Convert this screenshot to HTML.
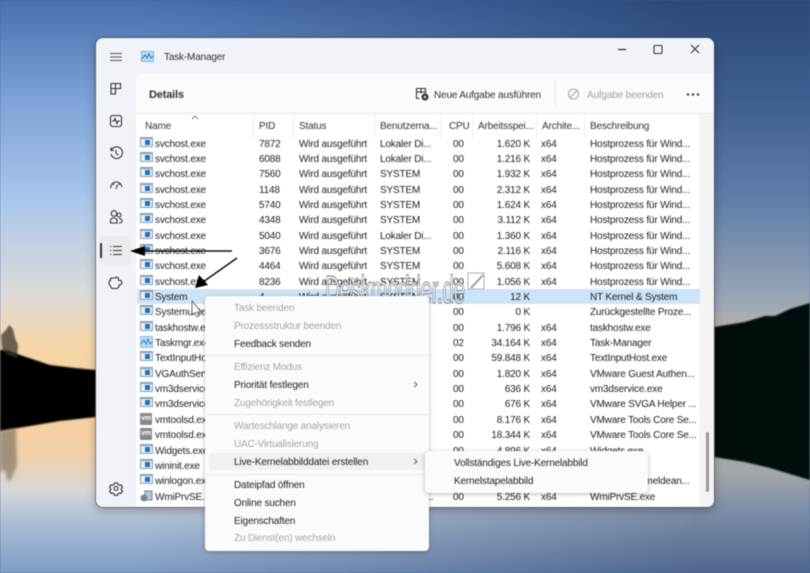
<!DOCTYPE html>
<html lang="de"><head><meta charset="utf-8"><title>Task-Manager</title>
<style>
html,body{margin:0;padding:0;width:810px;height:573px;overflow:hidden;background:#3f5f98}
#p{position:relative;width:810px;height:573px;overflow:hidden;font:10px/15px "Liberation Sans",sans-serif;letter-spacing:-.17px;color:#222;filter:blur(.4px)}
.a{position:absolute}
.bgr{left:0;top:0;width:810px;height:573px;background:linear-gradient(180deg,#2a4879 0,#3f5f92 100px,#5f7ea9 200px,#9aa6b6 300px,#b8b4a8 330px,#a5a8a8 470px,#7d8ea8 510px,#4f658c 573px)}
.bgl{left:0;top:0;width:810px;height:573px;background:linear-gradient(180deg,#4a70ae 0,#7ea3d8 100px,#a9c6ea 200px,#dddcd8 295px,#f6d6a8 345px,#f7d0a2 430px,#efd2ae 460px,#d6d8d8 490px,#a9bcd6 525px,#7f9cc4 573px);-webkit-mask-image:linear-gradient(90deg,#000 0,#000 130px,rgba(0,0,0,.55) 400px,transparent 700px);mask-image:linear-gradient(90deg,#000 0,#000 130px,rgba(0,0,0,.55) 400px,transparent 700px)}
#win{left:96px;top:38px;width:618px;height:469px;background:#f1f3f8;border-radius:7px;box-shadow:0 0 0 1px rgba(70,70,80,.55),0 3px 10px rgba(0,0,0,.3)}
#hd{left:136px;top:74px;width:578px;height:39px;background:#fafbfc;border-top-left-radius:6px;border-bottom:1px solid #e8e8ea}
#tb{left:136px;top:114px;width:578px;height:393px;background:#fff;border-bottom-right-radius:7px;overflow:hidden}
#sb{left:699px;top:114px;width:15px;height:393px;background:#f4f4f5;border-bottom-right-radius:7px}
#th{left:705.500px;top:432px;width:3px;height:60px;background:#9a9a9a;border-radius:2px}
.s{position:absolute;top:114px;width:1px;height:24px;background:#ececec}
.h{position:absolute;top:119px;white-space:nowrap;color:#333}
.r{position:absolute;left:0;width:810px;height:15px;white-space:nowrap}
.r span{position:absolute;top:1px}
.n{left:155px}.i{left:259px}.t{left:299px}.u{left:380px}.c{left:453px}.m{right:280px}.x{left:541px}.d{left:590px}
.o{position:absolute;left:140px;top:1px;width:10.500px;height:7px;border:1px solid #929eaa;border-top-width:2px;background:#e6eef6}
.o:after{content:"";position:absolute;left:3.500px;top:1px;width:5px;height:5px;background:#1a74c6}
.vm{position:absolute;left:140px;top:1px;width:12px;height:12px;background:#85888c;border-radius:1px;color:#fff;font:bold 7px/11px "Liberation Sans",sans-serif;text-align:center;overflow:hidden}
#menu{left:205px;top:296px;width:224px;height:255px;background:#fbfbfb;border-radius:4px;box-shadow:0 1px 5px rgba(0,0,0,.28)}
#sub{left:425px;top:451px;width:223px;height:42px;background:#fbfbfb;border-radius:4px;box-shadow:0 1px 5px rgba(0,0,0,.28)}
.mi{position:absolute;left:234px;white-space:nowrap;color:#222}
.dis{color:#a6a6a6}
.sep{position:absolute;left:206px;width:222px;height:1px;background:#e6e6e6}
#hv{left:209px;top:453px;width:216px;height:17px;background:#f1f1f1;border-radius:3px}
#sel{left:100px;top:236px;width:31px;height:29px;background:#eaecf0;border-radius:4px}
#wm{left:325px;top:264px;font:26px/34px "Liberation Sans",sans-serif;color:rgba(255,255,255,.72);-webkit-text-stroke:.7px rgba(90,100,110,.8);letter-spacing:-.4px;white-space:nowrap;transform:scale(.79,1.5);transform-origin:0 0}
svg{position:absolute;left:0;top:0}
</style></head><body><div id="p">
<div class="a bgr"></div><div class="a bgl"></div>
<svg width="810" height="573">
<defs><filter id="b1" x="-30%" y="-30%" width="160%" height="160%"><feGaussianBlur stdDeviation="1.5"/></filter><filter id="b2" x="-10%" y="-10%" width="120%" height="120%"><feGaussianBlur stdDeviation=".8"/></filter></defs>
<path d="M0 350L8 350 20 355 35 360 50 365 75 368 96 370V417L60 421 30 426 0 431Z" fill="#050505" filter="url(#b2)"/>
<path d="M2 350L1 335 6 330 9 325 13 329 15 338 18 345 17 358 8 355Z" fill="#3a372f" opacity=".75" filter="url(#b2)"/>
<path d="M0 431L16 428 17 465 12 478 8 482 5 470 0 472Z" fill="#6d675a" opacity=".6" filter="url(#b1)"/>
<path d="M714 327L745 322 765 316 775 316 790 309 810 303V480L790 474 770 468 745 462 714 457Z" fill="#05080f" filter="url(#b2)"/>
</svg>
<div class="a" id="win"></div><div class="a" id="hd"></div><div class="a" id="tb"></div><div class="a" id="sb"></div><div class="a" id="th"></div>
<div class="a" id="sel"></div><div class="a" style="left:100px;top:243px;width:2px;height:15px;background:#333"></div>

<div class="a" style="left:164px;top:50px;color:#333">Task-Manager</div>
<div class="a" style="left:149px;top:88px;font-weight:bold;font-size:11px;color:#333">Details</div>
<div class="a" style="left:434px;top:88px;color:#333">Neue Aufgabe ausführen</div>
<div class="a" style="left:587px;top:88px;color:#a2a2a2">Aufgabe beenden</div>
<div class="a" style="left:555px;top:81px;width:1px;height:26px;background:#ececec"></div>

<div class="s" style="left:253px"></div><div class="s" style="left:293px"></div><div class="s" style="left:374px"></div><div class="s" style="left:440px"></div><div class="s" style="left:472px"></div><div class="s" style="left:536px"></div><div class="s" style="left:584px"></div>
<div class="h" style="left:145px">Name</div><div class="h" style="left:259px">PID</div><div class="h" style="left:299px">Status</div><div class="h" style="left:380px">Benutzerna...</div><div class="h" style="left:449px">CPU</div><div class="h" style="left:478px">Arbeitsspei...</div><div class="h" style="left:542px">Archite...</div><div class="h" style="left:590px">Beschreibung</div>

<div class="a" style="left:137px;top:289px;width:563px;height:15px;background:#cce4f8"></div>

<div class="r" style="top:135.5px"><i class="o"></i><span class="n">svchost.exe</span><span class="i">7872</span><span class="t">Wird ausgeführt</span><span class="u">Lokaler Di...</span><span class="c">00</span><span class="m">1.620 K</span><span class="x">x64</span><span class="d">Hostprozess für Wind...</span></div>
<div class="r" style="top:150.85px"><i class="o"></i><span class="n">svchost.exe</span><span class="i">6088</span><span class="t">Wird ausgeführt</span><span class="u">Lokaler Di...</span><span class="c">00</span><span class="m">1.216 K</span><span class="x">x64</span><span class="d">Hostprozess für Wind...</span></div>
<div class="r" style="top:166.2px"><i class="o"></i><span class="n">svchost.exe</span><span class="i">7560</span><span class="t">Wird ausgeführt</span><span class="u">SYSTEM</span><span class="c">00</span><span class="m">1.932 K</span><span class="x">x64</span><span class="d">Hostprozess für Wind...</span></div>
<div class="r" style="top:181.55px"><i class="o"></i><span class="n">svchost.exe</span><span class="i">1148</span><span class="t">Wird ausgeführt</span><span class="u">SYSTEM</span><span class="c">00</span><span class="m">2.312 K</span><span class="x">x64</span><span class="d">Hostprozess für Wind...</span></div>
<div class="r" style="top:196.9px"><i class="o"></i><span class="n">svchost.exe</span><span class="i">5740</span><span class="t">Wird ausgeführt</span><span class="u">SYSTEM</span><span class="c">00</span><span class="m">1.624 K</span><span class="x">x64</span><span class="d">Hostprozess für Wind...</span></div>
<div class="r" style="top:212.25px"><i class="o"></i><span class="n">svchost.exe</span><span class="i">4348</span><span class="t">Wird ausgeführt</span><span class="u">SYSTEM</span><span class="c">00</span><span class="m">3.112 K</span><span class="x">x64</span><span class="d">Hostprozess für Wind...</span></div>
<div class="r" style="top:227.6px"><i class="o"></i><span class="n">svchost.exe</span><span class="i">5040</span><span class="t">Wird ausgeführt</span><span class="u">Lokaler Di...</span><span class="c">00</span><span class="m">1.360 K</span><span class="x">x64</span><span class="d">Hostprozess für Wind...</span></div>
<div class="r" style="top:242.95px"><i class="o"></i><span class="n">svchost.exe</span><span class="i">3676</span><span class="t">Wird ausgeführt</span><span class="u">SYSTEM</span><span class="c">00</span><span class="m">2.116 K</span><span class="x">x64</span><span class="d">Hostprozess für Wind...</span></div>
<div class="r" style="top:258.3px"><i class="o"></i><span class="n">svchost.exe</span><span class="i">4464</span><span class="t">Wird ausgeführt</span><span class="u">SYSTEM</span><span class="c">00</span><span class="m">5.608 K</span><span class="x">x64</span><span class="d">Hostprozess für Wind...</span></div>
<div class="r" style="top:273.65px"><i class="o"></i><span class="n">svchost.exe</span><span class="i">8236</span><span class="t">Wird ausgeführt</span><span class="u">SYSTEM</span><span class="c">00</span><span class="m">1.056 K</span><span class="x">x64</span><span class="d">Hostprozess für Wind...</span></div>
<div class="r" style="top:289px"><i class="o"></i><span class="n">System</span><span class="i">4</span><span class="t">Wird ausgeführt</span><span class="u">SYSTEM</span><span class="c">00</span><span class="m">12 K</span><span class="d">NT Kernel &amp; System</span></div>
<div class="r" style="top:304.35px"><i class="o"></i><span class="n">Systemunterbrechungen</span><span class="c">00</span><span class="m">0 K</span><span class="d">Zurückgestellte Proze...</span></div>
<div class="r" style="top:319.7px"><i class="o"></i><span class="n">taskhostw.exe</span><span class="c">00</span><span class="m">1.796 K</span><span class="x">x64</span><span class="d">taskhostw.exe</span></div>
<div class="r" style="top:335.05px"><svg class="a" style="left:140px;top:1px" width="13" height="12"><rect x=".5" y=".5" width="12" height="11" fill="#bcdcf6" stroke="#8cb8dc"/><path d="M1 8L4 4 6 8 8 3 10 8 12 6" fill="none" stroke="#2a7fc8"/></svg><span class="n">Taskmgr.exe</span><span class="c">02</span><span class="m">34.164 K</span><span class="x">x64</span><span class="d">Task-Manager</span></div>
<div class="r" style="top:350.4px"><i class="o"></i><span class="n">TextInputHost.exe</span><span class="c">00</span><span class="m">59.848 K</span><span class="x">x64</span><span class="d">TextInputHost.exe</span></div>
<div class="r" style="top:365.75px"><i class="o"></i><span class="n">VGAuthService.exe</span><span class="c">00</span><span class="m">1.820 K</span><span class="x">x64</span><span class="d">VMware Guest Authen...</span></div>
<div class="r" style="top:381.1px"><i class="o"></i><span class="n">vm3dservice.exe</span><span class="c">00</span><span class="m">636 K</span><span class="x">x64</span><span class="d">vm3dservice.exe</span></div>
<div class="r" style="top:396.45px"><i class="o"></i><span class="n">vm3dservice.exe</span><span class="c">00</span><span class="m">676 K</span><span class="x">x64</span><span class="d">VMware SVGA Helper ...</span></div>
<div class="r" style="top:411.8px"><i class="vm">vm</i><span class="n">vmtoolsd.exe</span><span class="c">00</span><span class="m">8.176 K</span><span class="x">x64</span><span class="d">VMware Tools Core Se...</span></div>
<div class="r" style="top:427.15px"><i class="vm">vm</i><span class="n">vmtoolsd.exe</span><span class="c">00</span><span class="m">18.344 K</span><span class="x">x64</span><span class="d">VMware Tools Core Se...</span></div>
<div class="r" style="top:442.5px"><i class="o"></i><span class="n">Widgets.exe</span><span class="c">00</span><span class="m">4.896 K</span><span class="x">x64</span><span class="d">Widgets.exe</span></div>
<div class="r" style="top:457.85px"><i class="o"></i><span class="n">wininit.exe</span><span class="c">00</span><span class="m">1.240 K</span><span class="x">x64</span><span class="d">wininit.exe</span></div>
<div class="r" style="top:473.2px"><i class="o"></i><span class="n">winlogon.exe</span><span class="c">00</span><span class="m">2.136 K</span><span class="x">x64</span><span class="d">Windows-Anmeldean...</span></div>
<div class="r" style="top:488.55px"><svg class="a" style="left:140px;top:1px" width="13" height="12"><rect x="5" y="1" width="7" height="9" fill="#b8c6d4" stroke="#6f8092"/><circle cx="4" cy="8" r="3.5" fill="#7b8794"/></svg><span class="n">WmiPrvSE.exe</span><span class="u" style="left:380px">Netzwerkd...</span><span class="c">00</span><span class="m">5.256 K</span><span class="x">x64</span><span class="d">WmiPrvSE.exe</span></div>

<div class="a" id="wm">Deskmodder.de</div>
<svg width="810" height="573"><path d="M468 273h16v16h-16z" fill="rgba(255,255,255,.6)" stroke="#aab0b5"/><path d="M471 288L483 275" stroke="#9aa0a5" stroke-width="2"/></svg>

<div class="a" id="menu"></div>
<div class="a" id="hv"></div>
<div class="mi dis" style="top:301px">Task beenden</div>
<div class="mi dis" style="top:319px">Prozessstruktur beenden</div>
<div class="mi" style="top:337px">Feedback senden</div>
<div class="sep" style="top:355px"></div>
<div class="mi dis" style="top:360px">Effizienz Modus</div>
<div class="mi" style="top:378px">Priorität festlegen</div>
<div class="mi dis" style="top:396px">Zugehörigkeit festlegen</div>
<div class="sep" style="top:414px"></div>
<div class="mi dis" style="top:419px">Warteschlange analysieren</div>
<div class="mi dis" style="top:437px">UAC-Virtualisierung</div>
<div class="mi" style="top:455px">Live-Kernelabbilddatei erstellen</div>
<div class="sep" style="top:474px"></div>
<div class="mi" style="top:478px">Dateipfad öffnen</div>
<div class="mi" style="top:496px">Online suchen</div>
<div class="mi" style="top:514px">Eigenschaften</div>
<div class="mi dis" style="top:531px">Zu Dienst(en) wechseln</div>
<div class="a" id="sub"></div>
<div class="mi" style="left:454px;top:456px">Vollständiges Live-Kernelabbild</div>
<div class="mi" style="left:454px;top:474px">Kernelstapelabbild</div>

<svg width="810" height="573" fill="none" stroke="#333" stroke-width="1.100">
<!-- window controls -->
<path d="M618 49.500h8" stroke-width="1.300"/><rect x="654" y="45.500" width="8" height="8" rx="1"/><path d="M691 45l8 8M699 45l-8 8"/>
<!-- hamburger -->
<path d="M110 53.500h12M110 57h12M110 60.500h12" stroke="#555"/>
<!-- title icon -->
<rect x="141.500" y="51.500" width="12" height="10" fill="#bcdcf6" stroke="#8cb8dc"/><path d="M142 59l3-4 2 3 2-4 2 4 2-2" stroke="#2a7fc8"/>
<!-- overview -->
<path d="M111 83.500h4.500v5h-4.500zM115.500 83.500h5v5h-5zM111 88.500h4.500v5.500h-4.500z"/>
<!-- perf -->
<rect x="110.500" y="115.500" width="11" height="11" rx="2"/><path d="M112 121h2l1-2.500 2 5 1-2.500h2"/>
<!-- history -->
<path d="M111.500 150a5.800 5.800 0 1 1-.5 4M111 147.500v3h3M116 150v3.500l2.500 1.500"/>
<!-- startup -->
<path d="M110.500 188c1-5 3.500-6 6-6s4.500 1.500 5.500 5M116 189l1.500-4.500M113 183.500l.8 1.500M119.500 183.500l-.8 1.500"/>
<!-- users -->
<circle cx="114" cy="213.500" r="2.800"/><path d="M110.500 223v-2c0-2 1.500-3 3.500-3s3 1 3 2.500v2.500z"/><circle cx="119" cy="215" r="2"/><path d="M119 218.500c2 0 3 1 3 2.500s-1 2-3 2"/>
<!-- details -->
<path d="M113 246.500h9M113 250.500h9M113 254.500h9M110 246.500h1.200M110 250.500h1.200M110 254.500h1.200"/>
<!-- services -->
<path d="M115 278l1.500-1 2 1v2.500h2.500l1 2-1 2-2 .5v2l-2 1.500h-5l-1.500-2-.5-1.500-1-1v-2.500l1.500-1v-2l2.500-.5z"/>
<!-- settings -->
<circle cx="116" cy="488.500" r="2"/><path d="M114.500 483h3l.5 1.500 1.500.8 1.500-.5 1.500 2.500-1.200 1.200 0 1.500 1.200 1-1.500 2.500-1.500-.5-1.500.8-.5 1.500h-3l-.5-1.500-1.500-.8-1.500.5-1.500-2.500 1.200-1.200 0-1.500-1.200-1 1.500-2.500 1.500.5 1.500-.8z"/>
<!-- new task -->
<path d="M419.500 98.500h-3v-10h9v5M416.500 92h9M421 88.500v5" stroke="#333"/><circle cx="425" cy="97" r="3.500" fill="#333" stroke="none"/><path d="M423.500 97h3M425 95.500v3" stroke="#fff" stroke-width=".8"/>
<!-- end task -->
<circle cx="573.500" cy="94" r="5" stroke="#a8a8a8"/><path d="M570 97.500l7-7" stroke="#a8a8a8"/>
<!-- dots -->
<circle cx="688" cy="94.500" r="1.200" fill="#333" stroke="none"/><circle cx="693" cy="94.500" r="1.200" fill="#333" stroke="none"/><circle cx="698" cy="94.500" r="1.200" fill="#333" stroke="none"/>
<!-- sort caret -->
<path d="M192 119l3-3 3 3" stroke="#888"/>
<!-- menu arrows -->
<path d="M414 382l3 2.500-3 2.500M414 459l3 2.500-3 2.500" stroke="#666"/>
<!-- black arrows -->
<path d="M232 251H140" stroke="#111" stroke-width="1.500"/><path d="M130 251l15-5v10z" fill="#000" stroke="none"/>
<path d="M237 258L203 282" stroke="#111" stroke-width="1.500"/><path d="M195 288l4-13 9 10z" fill="#000" stroke="none"/>
<!-- cursor -->
<path d="M192 301v14l3-2.500 2 4.500 2-1-2-4h4z" fill="#fff" stroke="#555" stroke-width=".8"/>
</svg>
</div></body></html>
